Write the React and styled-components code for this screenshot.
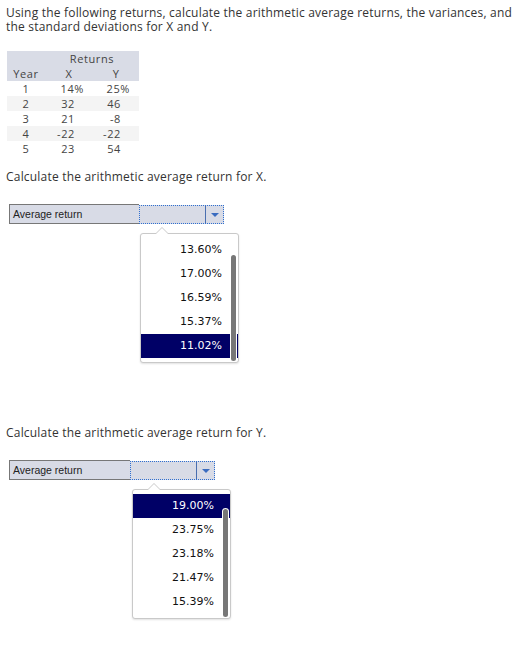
import React from "react";
import styled, { createGlobalStyle } from "styled-components";

const Global = createGlobalStyle`
  html, body { margin: 0; padding: 0; background: #fff; }
  body { font-family: "Open Sans", Lato, sans-serif; color: #333; }
`;

const Page = styled.div`
  padding: 6px 2px 20px 6px;
  width: 520px;
  box-sizing: border-box;
`;

const Para = styled.p`
  margin: ${(p) => p.$mt || 0}px 0 0 0;
  font-size: 12px;
  letter-spacing: 0.2px;
  line-height: 14px;
  color: #333;
`;

const Table = styled.table`
  margin: 17px 0 0 1px;
  border-collapse: collapse;
  font-size: 11px;
  letter-spacing: 0.6px;
  color: #444;
`;

const HeadRow = styled.tr`
  background: #d9dce6;
`;

const Row = styled.tr`
  background: ${(p) => (p.$alt ? "#f4f4f4" : "#fff")};
`;

const Th = styled.th`
  font-weight: normal;
  height: 15px;
  padding: 0;
  line-height: 15px;
  text-align: center;
  width: ${(p) => p.$w || "auto"};
`;

const Td = styled.td`
  height: 15px;
  padding: 0 ${(p) => (p.$num ? "18px" : "0")} 0 0;
  line-height: 15px;
  text-align: ${(p) => (p.$num ? "right" : "center")};
`;

const Pct = styled.span`
  display: inline-block;
  margin-right: -9px;
`;

const Field = styled.div`
  margin: 20px 0 0 3px;
`;

const Control = styled.div`
  display: flex;
  height: 20px;
`;

const Label = styled.div`
  width: ${(p) => p.$w}px;
  box-sizing: border-box;
  background: #d8dbe6;
  border: 1px solid #777;
  border-right: none;
  font-family: "Liberation Sans", Arial, sans-serif;
  font-size: 10.5px;
  line-height: 18px;
  color: #222;
  padding-left: 3px;
  white-space: nowrap;
`;

const Select = styled.div`
  width: 85px;
  box-sizing: border-box;
  background: #d8dbe6;
  border: 1px dotted #2f6fd0;
  display: flex;
  justify-content: flex-end;
  margin-top: 1px;
  height: 19px;
`;

const Caret = styled.div`
  width: 17px;
  border-left: 1px solid #4a6fb0;
  display: flex;
  align-items: center;
  justify-content: center;
  &::after {
    content: "";
    width: 0;
    height: 0;
    border-left: 4px solid transparent;
    border-right: 4px solid transparent;
    border-top: 4px solid #3a6cc0;
  }
`;

const Menu = styled.div`
  position: relative;
  margin: 9px 0 0 ${(p) => p.$ml}px;
  width: 99px;
  box-sizing: border-box;
  background: #fff;
  border: 1px solid #c9c9c9;
  border-radius: 3px;
  box-shadow: 0 1px 2px rgba(0, 0, 0, 0.12);
  padding: 4px 0 4px 0;
  &::before {
    content: "";
    position: absolute;
    top: -7px;
    left: 14px;
    border-left: 7px solid transparent;
    border-right: 7px solid transparent;
    border-bottom: 7px solid #c9c9c9;
  }
  &::after {
    content: "";
    position: absolute;
    top: -6px;
    left: 15px;
    border-left: 6px solid transparent;
    border-right: 6px solid transparent;
    border-bottom: 6px solid #fff;
  }
`;

const Item = styled.div`
  height: 24px;
  line-height: 24px;
  text-align: right;
  padding-right: 16px;
  font-family: "DejaVu Sans", Verdana, sans-serif;
  font-size: 11px;
  color: ${(p) => (p.$sel ? "#fff" : "#111")};
  background: ${(p) => (p.$sel ? "#000066" : "transparent")};
`;

const Scroll = styled.div`
  position: absolute;
  right: 2px;
  top: ${(p) => p.$top}px;
  bottom: 1px;
  width: 5px;
  background: #777;
  border-radius: 3px;
  box-shadow: 0 0 0 1px #fff;
`;

const rows = [
  ["1", "14", "25", true],
  ["2", "32", "46"],
  ["3", "21", "-8"],
  ["4", "-22", "-22"],
  ["5", "23", "54"],
];

function Dropdown({ labelW, menuMl, items, sel, scrollTop }) {
  return (
    <Field>
      <Control>
        <Label $w={labelW}>Average return</Label>
        <Select>
          <Caret />
        </Select>
      </Control>
      <Menu $ml={menuMl}>
        {items.map((it, i) => (
          <Item key={it} $sel={i === sel}>
            {it}
          </Item>
        ))}
        <Scroll $top={scrollTop} />
      </Menu>
    </Field>
  );
}

export default function App() {
  return (
    <Page>
      <Global />
      <Para>
        Using the following returns, calculate the arithmetic average returns, the variances, and
        the standard deviations for X and Y.
      </Para>
      <Table>
        <thead>
          <HeadRow>
            <Th $w="38px"></Th>
            <Th colSpan={2}>Returns</Th>
          </HeadRow>
          <HeadRow>
            <Th $w="38px">Year</Th>
            <Th $w="48px">X</Th>
            <Th $w="46px">Y</Th>
          </HeadRow>
        </thead>
        <tbody>
          {rows.map(([y, x, v, pct], i) => (
            <Row key={y} $alt={i % 2 === 1}>
              <Td>{y}</Td>
              <Td $num>
                {x}
                {pct && <Pct>%</Pct>}
              </Td>
              <Td $num>
                {v}
                {pct && <Pct>%</Pct>}
              </Td>
            </Row>
          ))}
        </tbody>
      </Table>
      <Para $mt={14}>Calculate the arithmetic average return for X.</Para>
      <Dropdown
        labelW={130}
        menuMl={131}
        items={["13.60%", "17.00%", "16.59%", "15.37%", "11.02%"]}
        sel={4}
        scrollTop={21}
      />
      <Para $mt={63}>Calculate the arithmetic average return for Y.</Para>
      <Dropdown
        labelW={121}
        menuMl={123}
        items={["19.00%", "23.75%", "23.18%", "21.47%", "15.39%"]}
        sel={0}
        scrollTop={19}
      />
    </Page>
  );
}
